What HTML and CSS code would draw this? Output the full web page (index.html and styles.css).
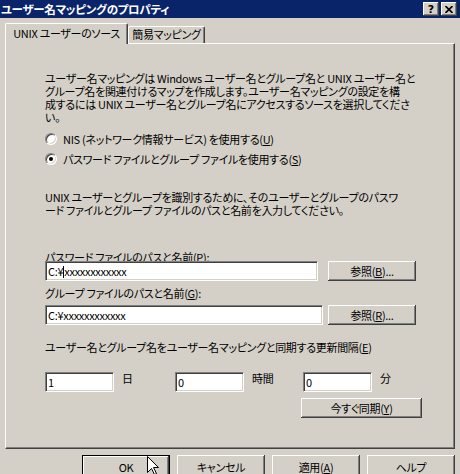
FILE: index.html
```html
<!DOCTYPE html>
<html lang="ja">
<head>
    <meta charset="UTF-8">
    <title>ユーザー名マッピングのプロパティ</title>
    <link rel="stylesheet" href="styles.css">
</head>
<body>
    <!-- Заголовок окна -->
    <div class="titlebar">
        <span class="title">ユーザー名マッピングのプロパティ</span>
        <div class="caption-btns">
            <span class="cap-btn">?</span>
            <span class="cap-btn">
                <svg width="8" height="7" viewBox="0 0 8 7"><path d="M0.5 0 L7.5 7 M7.5 0 L0.5 7" stroke="#000" stroke-width="1.6"/></svg>
            </span>
        </div>
    </div>

    <div class="content">
        <!-- Вкладки -->
        <div class="tabs">
            <div class="tab active">UNIX ユーザーのソース</div>
            <div class="tab">簡易マッピング</div>
        </div>

        <div class="panel">
            <p class="desc">ユーザー名マッピングは Windows ユーザー名とグループ名と UNIX ユーザー名と<br>グループ名を関連付けるマップを作成します。ユーザー名マッピングの設定を構<br>成するには UNIX ユーザー名とグループ名にアクセスするソースを選択してくださ<br>い。</p>

            <div class="radios">
                <label class="radio"><span class="radio-mark"></span><span>NIS (ネットワーク情報サービス) を使用する(<u>U</u>)</span></label>
                <label class="radio"><span class="radio-mark checked"></span><span>パスワード ファイルとグループ ファイルを使用する(<u>S</u>)</span></label>
            </div>

            <p class="desc desc-files">UNIX ユーザーとグループを識別するために、そのユーザーとグループのパスワ<br>ード ファイルとグループ ファイルのパスと名前を入力してください。</p>

            <div class="label label-passwd">パスワード ファイルのパスと名前(<u>P</u>):</div>
            <div class="field-row row-passwd">
                <span class="textbox path-passwd">C:¥<span class="caret"></span>xxxxxxxxxxxx</span>
                <span class="btn browse"><span>参照(<u>B</u>)...</span></span>
            </div>

            <div class="label label-group">グループ ファイルのパスと名前(<u>G</u>):</div>
            <div class="field-row row-group">
                <span class="textbox path-group">C:¥xxxxxxxxxxxx</span>
                <span class="btn browse"><span>参照(<u>R</u>)...</span></span>
            </div>

            <div class="label label-sync">ユーザー名とグループ名をユーザー名マッピングと同期する更新間隔(<u>E</u>)</div>
            <div class="interval">
                <div class="interval-item"><span class="textbox small">1</span><span class="unit">日</span></div>
                <div class="interval-item"><span class="textbox small">0</span><span class="unit">時間</span></div>
                <div class="interval-item"><span class="textbox small">0</span><span class="unit">分</span></div>
            </div>
            <div class="sync-row">
                <span class="btn sync"><span>今すぐ同期(<u>Y</u>)</span></span>
            </div>
        </div>

        <!-- Кнопки диалога -->
        <div class="footer">
            <span class="btn dlg default">OK</span>
            <span class="btn dlg">キャンセル</span>
            <span class="btn dlg"><span>適用(<u>A</u>)</span></span>
            <span class="btn dlg">ヘルプ</span>
        </div>
    </div>

    <svg class="cursor" width="12" height="19" viewBox="0 0 12 19"><path d="M0.5 0.5 V16.5 L4.5 12.5 L7.5 18.5 L9.5 17.5 L6.5 11.5 H11.5 Z" fill="#fff" stroke="#000" stroke-width="1"/></svg>
</body>
</html>
```

FILE: styles.css
```css
/* Общие стили */
* {
    box-sizing: border-box;
}

body {
    margin: 0;
    width: 460px;
    height: 474px;
    overflow: hidden;
    position: relative;
    background: #d4d0c8;
    font-family: "Noto Sans CJK JP", "Noto Sans", sans-serif;
    font-size: 11px;
    letter-spacing: -0.3px;
    color: #000;
    font-feature-settings: "palt";
}

u {
    text-underline-offset: 1px;
}

/* Заголовок */
.titlebar {
    height: 18px;
    background: #0a246a;
    display: flex;
    align-items: center;
    justify-content: space-between;
    padding: 0 3px 0 1px;
}

.title {
    color: #fff;
    font-weight: bold;
    font-size: 11.5px;
    line-height: 18px;
}

.caption-btns {
    display: flex;
    gap: 2px;
}

.cap-btn {
    width: 16px;
    height: 14px;
    display: flex;
    align-items: center;
    justify-content: center;
    background: #d4d0c8;
    box-shadow: inset -1px -1px #404040, inset 1px 1px #fff, inset -2px -2px #808080;
    font: bold 11px "DejaVu Sans", sans-serif;
    letter-spacing: 0;
}

.content {
    padding: 5px 5px 0 5px;
}

/* Вкладки */
.tabs {
    display: flex;
    align-items: flex-end;
    height: 20px;
}

.tab {
    height: 17px;
    line-height: 15px;
    text-align: center;
    white-space: nowrap;
    background: #d4d0c8;
    border-top: 1px solid #fff;
    border-left: 1px solid #fff;
    border-right: 1px solid #404040;
    border-radius: 2px 2px 0 0;
    box-shadow: inset -1px 0 #808080;
    width: 77px;
}

.tab.active {
    position: relative;
    z-index: 1;
    width: 123px;
    height: 21px;
    line-height: 18px;
    margin-bottom: -1px;
}

/* Панель */
.panel {
    height: 406px;
    border-top: 1px solid #fff;
    border-left: 1px solid #fff;
    border-right: 1px solid #404040;
    border-bottom: 1px solid #404040;
    box-shadow: inset -1px -1px #808080;
    padding: 28px 0 0 39px;
}

.desc {
    margin: 0;
    line-height: 13px;
    white-space: nowrap;
}

.desc-files {
    margin-top: 22px;
}

.radios {
    margin-top: 5px;
}

.radio {
    display: flex;
    align-items: center;
    gap: 6px;
    height: 20px;
}

.radio-mark {
    position: relative;
    width: 12px;
    height: 12px;
    border-radius: 50%;
    background: #fff;
    border: 1px solid;
    border-color: #808080 #fff #fff #808080;
    box-shadow: inset 1px 1px #404040, inset -1px -1px #d4d0c8;
}

.radio-mark.checked::after {
    content: "";
    position: absolute;
    left: 3px;
    top: 3px;
    width: 4px;
    height: 4px;
    border-radius: 50%;
    background: #000;
}

.label {
    line-height: 12px;
    white-space: nowrap;
}

.label-passwd {
    margin-top: 34px;
}

.label-group {
    margin-top: 6px;
}

.label-sync {
    margin-top: 16px;
}

.field-row {
    display: flex;
}

.row-passwd {
    margin-top: -2px;
    gap: 10px;
}

.row-group {
    margin-top: 6px;
    gap: 5px;
}

/* Поля ввода */
.textbox {
    display: block;
    height: 20px;
    padding-left: 2px;
    line-height: 18px;
    background: #fff;
    border: 1px solid;
    border-color: #808080 #fff #fff #808080;
    box-shadow: inset 1px 1px #404040, inset -1px -1px #d4d0c8;
    white-space: nowrap;
}

.caret {
    display: inline-block;
    width: 1px;
    height: 12px;
    background: #000;
    vertical-align: -2px;
}

.path-passwd {
    width: 273px;
}

.path-group {
    width: 278px;
}

.textbox.small {
    width: 69px;
}

/* Кнопки */
.btn {
    display: flex;
    align-items: center;
    justify-content: center;
    height: 20px;
    background: #d4d0c8;
    box-shadow: inset -1px -1px #404040, inset 1px 1px #fff, inset -2px -2px #808080, inset 2px 2px #d4d0c8;
    white-space: nowrap;
}

.browse {
    width: 88px;
}

.interval {
    display: grid;
    grid-template-columns: 130px 128px auto;
    margin-top: 19px;
}

.interval-item {
    display: flex;
    align-items: flex-start;
    gap: 8px;
}

.unit {
    line-height: 13px;
}

.sync-row {
    margin-top: 6px;
    padding-left: 256px;
}

.sync {
    width: 121px;
}

/* Нижние кнопки */
.footer {
    display: flex;
    justify-content: flex-end;
    gap: 7px;
    margin-top: 6px;
}

.dlg {
    width: 88px;
    height: 23px;
}

.dlg.default {
    border: 1px solid #000;
}

/* Курсор мыши */
.cursor {
    position: absolute;
    left: 147px;
    top: 456px;
}
```
